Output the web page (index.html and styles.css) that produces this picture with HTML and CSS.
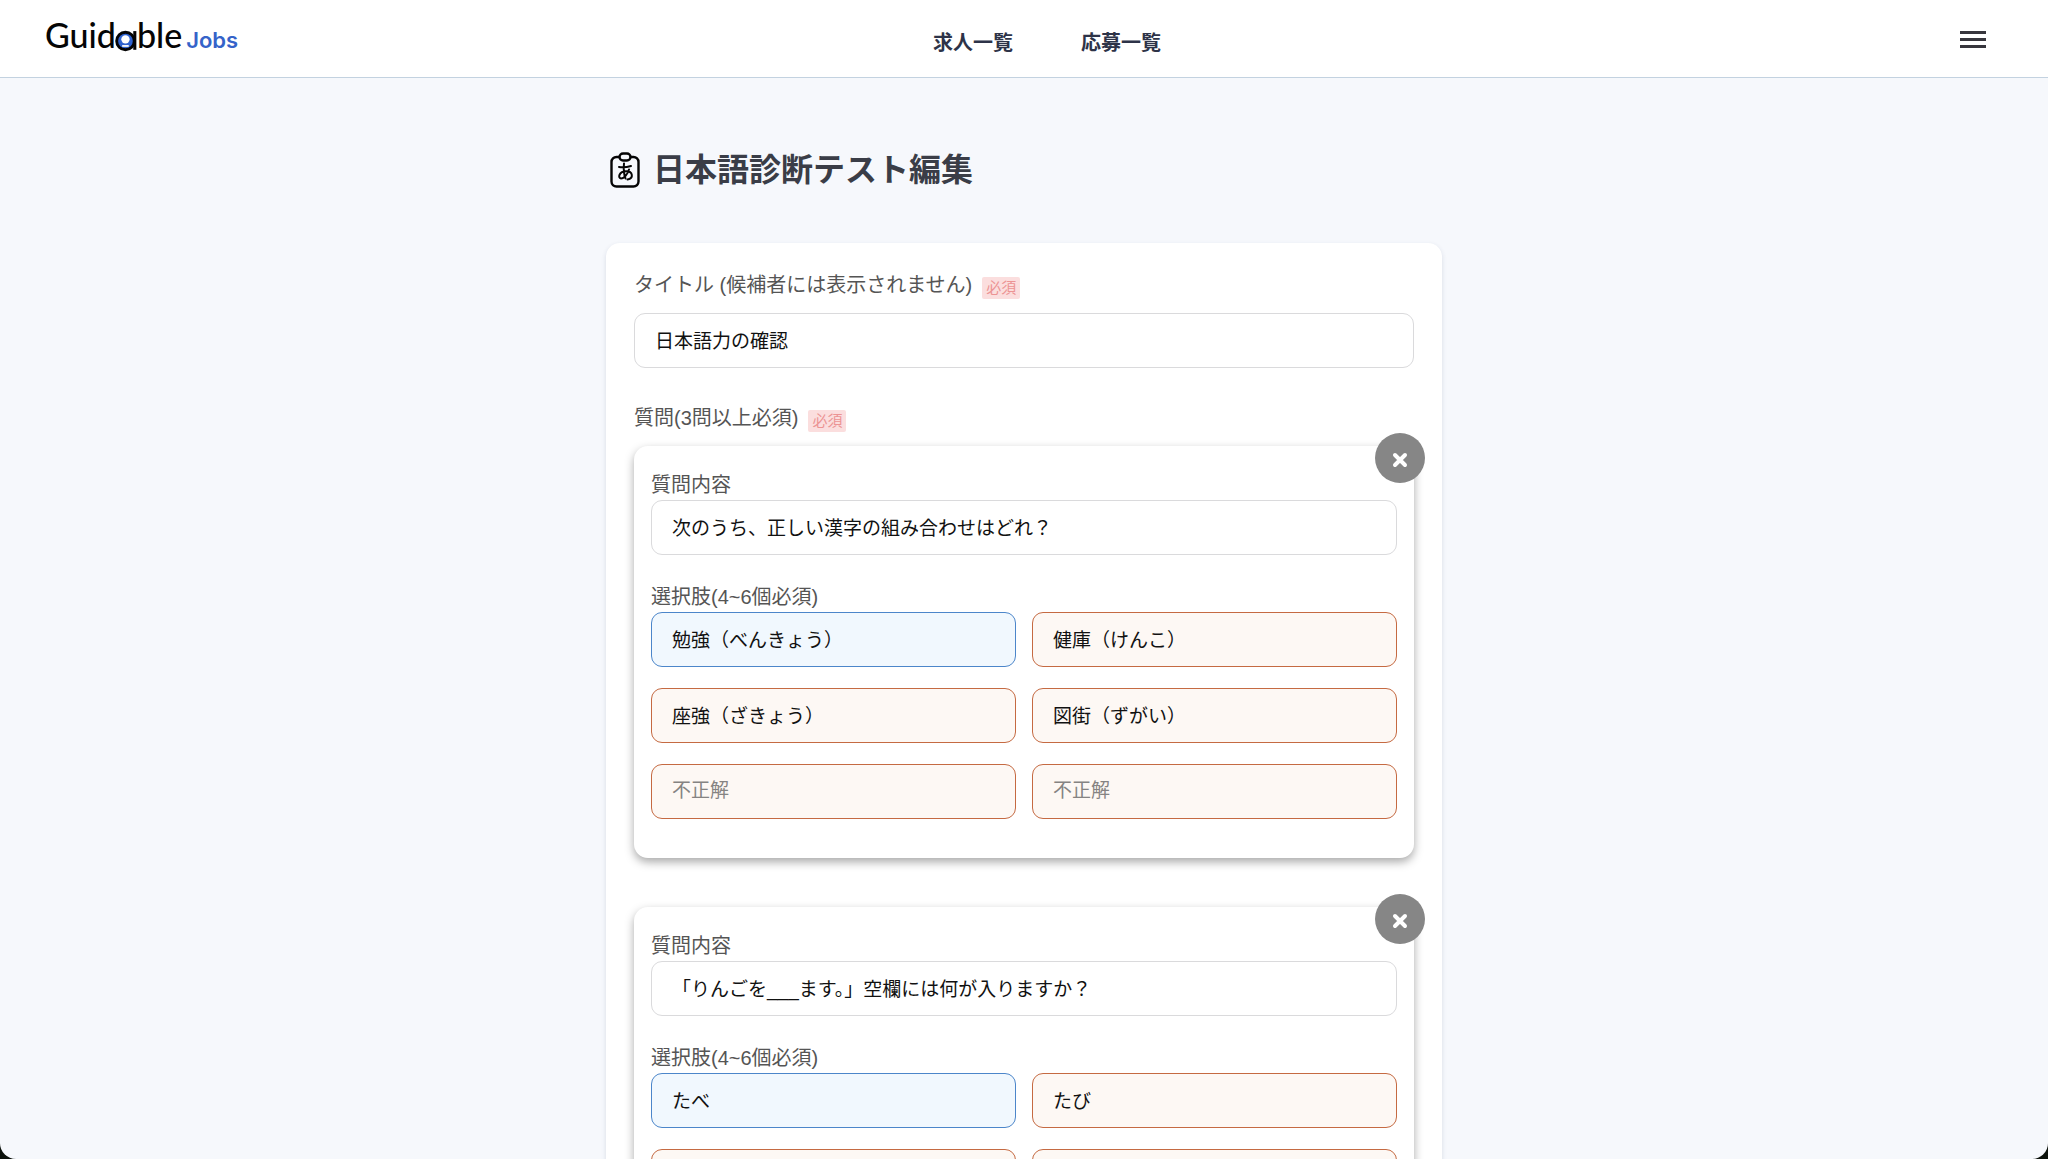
FILE: index.html
```html
<!DOCTYPE html>
<html lang="ja">
<head>
<meta charset="utf-8">
<meta name="viewport" content="width=device-width, initial-scale=1">
<title>日本語診断テスト編集 | Guidable Jobs</title>
<link rel="stylesheet" href="styles.css">
</head>
<body>
<div class="window">
  <header class="header">
    <a class="logo" href="#">
      <span class="logo-name">Guid<svg class="logo-mark" viewBox="0 0 20 20" role="img" aria-label="a"><circle cx="9.500" cy="10" r="8" fill="#2f62cf" stroke="#050505" stroke-width="2.600"/><path d="M18 1v17" stroke="#050505" stroke-width="2.800"/><circle cx="9.500" cy="8.500" r="3.800" fill="#fff"/><path d="M6.500 14.500h6" stroke="#fff" stroke-width="1.600"/></svg>ble</span>
      <span class="logo-jobs">Jobs</span>
    </a>
    <nav class="nav">
      <a class="nav-link" href="#">求人一覧</a>
      <a class="nav-link" href="#">応募一覧</a>
    </nav>
    <button class="menu" type="button" aria-label="メニュー">
      <svg width="26" height="18" viewBox="0 0 26 18"><path d="M0 1.500h26M0 8.500h26M0 15.500h26" stroke="#37363d" stroke-width="3"/></svg>
    </button>
  </header>

  <main class="main">
    <h1 class="page-title">
      <svg width="30" height="36" viewBox="0 0 30 36" fill="none" stroke="#050505" stroke-width="2.400" stroke-linecap="round" stroke-linejoin="round" aria-hidden="true">
        <path d="M9 5H6.500A5 5 0 0 0 1.500 10v19.500a5 5 0 0 0 5 5h17a5 5 0 0 0 5-5V10a5 5 0 0 0-5-5H21"/>
        <rect x="9.500" y="1.500" width="11" height="7" rx="3.500"/>
        <path stroke-width="2" d="M9 15c4 .6 8 .2 12-1M14 11.500c-.6 5.500-.4 10 1.500 15M19 17.500c-1.500 5-5 9-8 9-3.500-.5-2-7 5-7.200 7-.1 8 7 1.500 8.200"/>
      </svg>
      日本語診断テスト編集
    </h1>

    <form class="panel">
      <div class="label-row">
        <label class="label" for="title">タイトル (候補者には表示されません)</label>
        <span class="badge">必須</span>
      </div>
      <input class="field" id="title" type="text" value="日本語力の確認">

      <div class="label-row label-row-next">
        <span class="label">質問(3問以上必須)</span>
        <span class="badge">必須</span>
      </div>

      <section class="question">
        <button class="remove" type="button" aria-label="質問を削除">
          <svg width="16" height="16" viewBox="0 0 16 16"><path d="M3 3l10 10M13 3L3 13" stroke="#fff" stroke-width="4" stroke-linecap="round"/></svg>
        </button>
        <label class="label" for="q1">質問内容</label>
        <input class="field" id="q1" type="text" value="次のうち、正しい漢字の組み合わせはどれ？">
        <fieldset class="choices">
          <legend class="label">選択肢(4~6個必須)</legend>
          <div class="choice-grid">
            <input class="field correct" type="text" aria-label="正解" value="勉強（べんきょう）">
            <input class="field wrong" type="text" aria-label="不正解" value="健庫（けんこ）">
            <input class="field wrong" type="text" aria-label="不正解" value="座強（ざきょう）">
            <input class="field wrong" type="text" aria-label="不正解" value="図街（ずがい）">
            <input class="field wrong" type="text" aria-label="不正解" placeholder="不正解">
            <input class="field wrong" type="text" aria-label="不正解" placeholder="不正解">
          </div>
        </fieldset>
      </section>

      <section class="question">
        <button class="remove" type="button" aria-label="質問を削除">
          <svg width="16" height="16" viewBox="0 0 16 16"><path d="M3 3l10 10M13 3L3 13" stroke="#fff" stroke-width="4" stroke-linecap="round"/></svg>
        </button>
        <label class="label" for="q2">質問内容</label>
        <input class="field" id="q2" type="text" value="「りんごを___ます。」空欄には何が入りますか？">
        <fieldset class="choices">
          <legend class="label">選択肢(4~6個必須)</legend>
          <div class="choice-grid">
            <input class="field correct" type="text" aria-label="正解" value="たべ">
            <input class="field wrong" type="text" aria-label="不正解" value="たび">
            <input class="field wrong" type="text" aria-label="不正解">
            <input class="field wrong" type="text" aria-label="不正解">
          </div>
        </fieldset>
      </section>
    </form>
  </main>
</div>
</body>
</html>
```
FILE: styles.css
```css
* {
  box-sizing: border-box;
}

html {
  background: #0c120c;
}

body {
  margin: 0;
  font-family: "Liberation Sans", "Noto Sans CJK JP", sans-serif;
  font-size: 20px;
  color: #111;
}

.window {
  height: 100vh;
  overflow: hidden;
  background: #f6f8fc;
  border-radius: 0 0 16px 16px;
}

.header {
  display: grid;
  grid-template-columns: 1fr auto 1fr;
  align-items: center;
  height: 78px;
  background: #fff;
  border-bottom: 1px solid #c3d2e0;
}

.logo {
  display: flex;
  align-items: baseline;
  gap: 4px;
  padding: 0 0 2px 45px;
  color: #050505;
  text-decoration: none;
}

.logo-name {
  font: 500 34px/40px "Lato Medium", Lato, sans-serif;
}

.logo-mark {
  width: 22px;
  height: 22px;
  margin-left: -1px;
  vertical-align: -4px;
}

.logo-jobs {
  font: 600 22px/40px Inter, sans-serif;
  color: #3563c9;
}

.nav {
  display: flex;
  gap: 68px;
  padding: 8px 0 0 46px;
}

.nav-link {
  color: #2d3348;
  font-weight: 700;
  line-height: 30px;
  text-decoration: none;
}

.menu {
  justify-self: end;
  display: flex;
  margin-right: 62px;
  padding: 2px 0 0;
  border: 0;
  background: none;
}

.main {
  max-width: 836px;
  margin: 0 auto;
  padding: 68px 0 48px;
}

.page-title {
  display: flex;
  align-items: center;
  gap: 13px;
  margin: 0 0 49px;
  padding-left: 4px;
  font-size: 32px;
  line-height: 48px;
  color: #3a3d47;
}

.panel {
  padding: 28px;
  background: #fff;
  border-radius: 14px;
  box-shadow: 0 2px 5px rgba(40, 60, 100, 0.14);
}

.label-row {
  display: flex;
  align-items: center;
  gap: 10px;
  margin-bottom: 13px;
}

.label-row-next {
  margin-top: 36px;
}

.label {
  display: block;
  padding: 0;
  line-height: 29px;
  color: #555;
}

.badge {
  margin-top: 4px;
  padding: 0 4px;
  font-size: 15px;
  line-height: 22px;
  color: #ec9494;
  background: #fbdede;
  border-radius: 2px;
}

.field {
  display: block;
  width: 100%;
  height: 55px;
  padding: 0 20px 2px;
  font: inherit;
  font-size: 19px;
  color: #111;
  background: #fff;
  border: 1px solid #dadadc;
  border-radius: 11px;
}

.field::placeholder {
  color: #858382;
}

.question {
  position: relative;
  padding: 25px 17px 39px;
  background: #fff;
  border-radius: 14px;
  box-shadow: 0 4px 10px rgba(0, 0, 0, 0.34);
}

.question + .question {
  margin-top: 49px;
}

.remove {
  position: absolute;
  top: -13px;
  right: -11px;
  display: grid;
  place-items: center;
  width: 50px;
  height: 50px;
  padding: 4px 0 0;
  border: 0;
  border-radius: 50%;
  background: #868686;
}

.choices {
  margin: 28px 0 0;
  padding: 0;
  border: 0;
}

.choice-grid {
  display: grid;
  grid-template-columns: 1fr 1fr;
  gap: 21px 16px;
}

.correct {
  background: #f1f8fe;
  border-color: #4c86ca;
}

.wrong {
  background: #fdf8f4;
  border-color: #c56a42;
}
```
